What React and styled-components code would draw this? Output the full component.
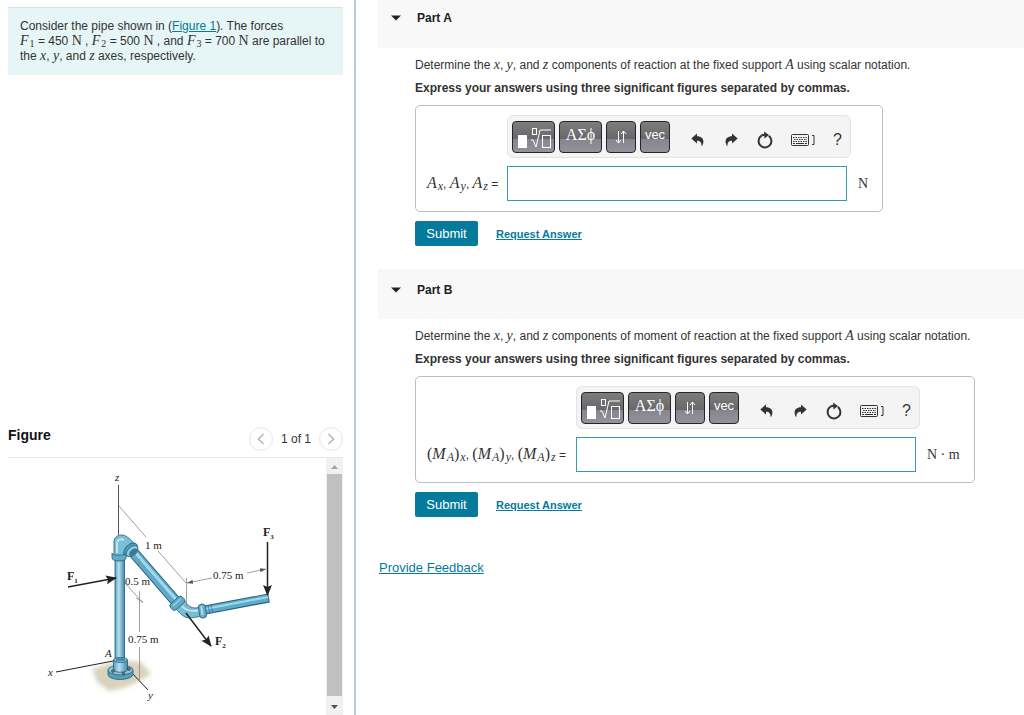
import React, { useState } from "react";
import styled, { createGlobalStyle } from "styled-components";

const GlobalStyle = createGlobalStyle`
  * {
    box-sizing: border-box;
  }
  body {
    margin: 0;
    background: #fff;
    color: #333;
    font-family: "Liberation Sans", Arial, sans-serif;
    font-size: 12px;
    line-height: 16px;
  }
  button,
  input {
    font-family: inherit;
  }
`;

const Page = styled.div`
  display: flex;
  min-height: 100vh;
`;

const Sidebar = styled.aside`
  display: flex;
  flex-direction: column;
  justify-content: space-between;
  flex: 0 0 356px;
  height: 100vh;
  padding: 7px 11px 0 8px;
  border-right: 2px solid #b9cbdf;
`;

const Problem = styled.section`
  padding: 11px 11px 11px 12px;
  background: #e6f5f6;
  border-top: 1px solid #d3e2e4;
  line-height: 15px;
`;

const NoWrap = styled.span`
  white-space: nowrap;
`;

const TextLink = styled.a`
  color: #047a9c;
  font-size: ${props => props.$size || "inherit"};
  font-weight: ${props => (props.$bold ? "bold" : "normal")};
`;

const MathText = styled.span`
  font-family: "Liberation Serif", "Times New Roman", serif;
  font-size: 14px;
  line-height: 0;
  font-style: ${props => (props.$upright ? "normal" : "italic")};
  white-space: nowrap;
`;

const Sub = styled.sub`
  margin-left: 1px;
  font-size: 10px;
  font-style: ${props => (props.$upright ? "normal" : "inherit")};
  line-height: 0;
  vertical-align: -2px;
`;

const FigureHeader = styled.header`
  display: flex;
  align-items: center;
  justify-content: space-between;
  height: 37px;
  border-bottom: 1px solid #e6e6e6;
`;

const FigureTitle = styled.h2`
  margin: 0;
  padding-bottom: 8px;
  font-size: 14px;
  color: #111;
`;

const Pager = styled.nav`
  display: flex;
  align-items: center;
  gap: 8px;
  font-size: 12px;
  color: #333;
`;

const PagerBtn = styled.button`
  display: flex;
  align-items: center;
  justify-content: center;
  width: 24px;
  height: 24px;
  padding: 0;
  border: 1px solid #e6e6e6;
  border-radius: 50%;
  background: #fff;
  color: #b5b5b5;
`;

const FigureBody = styled.div`
  display: flex;
  height: 257px;
`;

const Drawing = styled.svg`
  flex: 1;
  min-width: 0;
  height: 257px;
  font-family: "Liberation Serif", "Times New Roman", serif;
  font-size: 11px;
  fill: #222;
`;

const ScrollTrack = styled.div`
  display: flex;
  flex-direction: column;
  align-items: center;
  justify-content: space-between;
  width: 17px;
  padding: 0 1px;
  background: #f1f1f1;
`;

const ScrollArrow = styled.svg`
  width: 15px;
  height: 16px;
  fill: ${props => props.$color};
`;

const ScrollThumb = styled.div`
  flex: 1;
  align-self: stretch;
  margin-bottom: 3px;
  background: #c1c1c1;
`;

const Main = styled.main`
  flex: 1;
  min-width: 0;
  padding-left: 22px;
`;

const PartHeader = styled.header`
  display: flex;
  align-items: center;
  height: ${props => (props.$first ? "48px" : "50px")};
  padding: 0 0 ${props => (props.$first ? "12px" : "8px")} 13px;
  background: #f8f8f8;
`;

const ToggleBtn = styled.button`
  display: flex;
  align-items: center;
  gap: 16px;
  padding: 0;
  border: 0;
  background: none;
  color: #222;
  font-size: 12px;
  font-weight: bold;
`;

const PartBody = styled.div`
  padding: 9px 0 23px 37px;
`;

const Prompt = styled.p`
  margin: 0 0 7px;
`;

const Instructions = styled.p`
  margin: 0 0 9px;
  font-weight: bold;
`;

const AnswerBox = styled.div`
  display: inline-grid;
  grid-template-columns: ${props => props.$labelWidth} 340px auto;
  row-gap: 8px;
  padding: 9px 14px 10px 11px;
  border: 1px solid #bdbdbd;
  border-radius: 5px;
  vertical-align: top;
`;

const Toolbar = styled.div`
  grid-column: 2 / 4;
  justify-self: start;
  display: flex;
  align-items: center;
  gap: 4px;
  width: 344px;
  height: 43px;
  padding: 0 8px 0 4px;
  border: 1px solid #e3e3e3;
  border-radius: 6px;
  background: #f4f4f4;
`;

const KeyBtn = styled.button`
  display: flex;
  align-items: center;
  justify-content: center;
  width: ${props => (props.$wide ? "43px" : "30px")};
  height: 32px;
  padding: 0 0 ${props => (props.$raised ? "4px" : "0")};
  border: 1px solid #26262a;
  border-radius: 4px;
  background: linear-gradient(#7d7d80, #68686a 56%, #86868e 58%, #92929c);
  color: #fff;
  font-family: ${props =>
    props.$serif ? '"Liberation Serif", serif' : '"Liberation Sans", sans-serif'};
  font-size: ${props => (props.$serif ? "16px" : "13px")};
`;

const ToolGroup = styled.div`
  display: flex;
  flex: 1;
  align-items: center;
  justify-content: space-between;
  padding: 6px 0 0 15px;
`;

const ToolBtn = styled.button`
  display: flex;
  justify-content: center;
  min-width: ${props => (props.$narrow ? "0" : "16px")};
  padding: 0;
  border: 0;
  background: none;
  color: #333;
  font-size: 16px;
`;

const AnswerLabel = styled.label`
  align-self: center;
  white-space: nowrap;

  ${MathText} {
    font-size: 16px;
  }
  ${Sub} {
    font-size: 12px;
  }
`;

const AnswerInput = styled.input`
  width: 340px;
  height: 35px;
  padding: 0 8px;
  border: 1px solid #3a9bb0;
  background: #fff;
  font-size: 14px;
`;

const Unit = styled.span`
  align-self: center;
  padding-left: 11px;
`;

const Actions = styled.div`
  display: flex;
  align-items: baseline;
  gap: 18px;
  margin-top: 9px;
`;

const SubmitBtn = styled.button`
  width: 63px;
  height: 25px;
  padding: 0;
  border: 0;
  border-radius: 2px;
  background: #047a9c;
  color: #fff;
  font-size: 13px;
`;

const Feedback = styled.footer`
  padding: 20px 0 0 1px;
`;

const Var = ({ children, sub, uprightSub }) => (
  <MathText>
    {children}
    {sub && <Sub $upright={uprightSub}>{sub}</Sub>}
  </MathText>
);

const RootIcon = () => (
  <svg width="34" height="24" viewBox="0 0 34 24" fill="none" stroke="#fff">
    <rect x="1" y="10" width="9" height="13" fill="#fff" stroke="none" />
    <rect x="15.5" y="3.5" width="4" height="6" />
    <path d="M14 15h2l3 7 4-17h11" />
    <rect x="25.5" y="10.5" width="8" height="12" />
  </svg>
);

const ArrowsIcon = () => (
  <svg width="12" height="16" viewBox="0 0 12 16" fill="none" stroke="#fff">
    <path d="M3.5 2v12M1 11l2.500 3L6 11M8.500 14V2M6 5l2.500-3L11 5" />
  </svg>
);

const UndoIcon = ({ flip }) => (
  <svg width="13" height="14" viewBox="0 0 13 14" fill="currentColor">
    <path
      transform={flip ? "matrix(-1 0 0 1 13 0)" : undefined}
      d="M6 .5L.3 5.5 6 10.500V7.800C9 7.700 10.600 9.200 10.700 13.500C14 8.500 12.500 3.400 6 3.300Z"
    />
  </svg>
);

const ResetIcon = () => (
  <svg width="16" height="18" viewBox="0 0 16 18" fill="none" stroke="currentColor">
    <path d="M4.500 4.700A6.400 6.400 0 1 0 11.800 4.900" strokeWidth="2" />
    <path d="M7 .5l5 3.500-4.500 3.500z" fill="currentColor" stroke="none" />
    <path d="M4.500 4.700Q6 3.800 8 3.800" strokeWidth="2" />
  </svg>
);

const KeyboardIcon = () => (
  <svg width="24" height="12" viewBox="0 0 24 12" fill="none" stroke="currentColor">
    <rect x=".5" y=".5" width="17" height="11" rx="1" />
    <path d="M2 3.500h14M3 5.500h13M2 7.500h14" strokeDasharray="1.500 1" />
    <path d="M2 9.500h2M5 9.500h8M14 9.500h2" />
    <path d="M21 1.500h2v9h-2" />
  </svg>
);

function PipeFigure() {
  return (
    <Drawing viewBox="8 458 318 257" role="img" aria-label="Pipe assembly">
      <defs>
        <linearGradient id="post" x1="0" x2="1">
          <stop offset="0" stopColor="#4f9fc0" />
          <stop offset=".4" stopColor="#b9e0ee" />
          <stop offset="1" stopColor="#3f88aa" />
        </linearGradient>
        <filter id="soft" x="-20%" y="-20%" width="140%" height="140%">
          <feGaussianBlur stdDeviation="2" />
        </filter>
        <marker
          id="head"
          viewBox="0 0 12 10"
          refX="11"
          refY="5"
          markerWidth="12"
          markerHeight="9"
          markerUnits="userSpaceOnUse"
          orient="auto"
        >
          <path d="M0 0l12 5-12 5 2-5z" />
        </marker>
        <marker
          id="tick"
          viewBox="0 0 6 4"
          refX="6"
          refY="2"
          markerWidth="6"
          markerHeight="4"
          markerUnits="userSpaceOnUse"
          orient="auto-start-reverse"
        >
          <path d="M0 0l6 2-6 2z" fill="#555" />
        </marker>
      </defs>

      {/* ground shadow */}
      <path
        d="M92 669l27-9 22 2 10 12-13 8-14 6-15 3-12-9z"
        fill="#d8d3bd"
        filter="url(#soft)"
      />

      {/* axes */}
      <g fill="none" stroke="#555">
        <path d="M118.500 485v50" />
        <path d="M56 672l57-11" stroke="#222" />
        <path d="M131 672l17 18" stroke="#222" />
      </g>

      {/* vertical post */}
      <rect x="115" y="558" width="9.500" height="104" fill="url(#post)" stroke="#275f7a" strokeWidth=".8" />

      {/* flange */}
      <path d="M108 670v5c2 6 22 6 25 0v-5z" fill="#559fbb" stroke="#275f7a" strokeWidth=".8" />
      <ellipse cx="120.500" cy="670" rx="12.500" ry="5" fill="#8bc6dc" stroke="#275f7a" strokeWidth=".8" />
      <path d="M113.500 660v10c2 3 12 3 14 0v-10z" fill="url(#post)" stroke="#275f7a" strokeWidth=".8" />
      <ellipse cx="120.500" cy="660" rx="7" ry="2.500" fill="#7ab9d1" stroke="#275f7a" strokeWidth=".8" />
      <path d="M116 658h9v3h-9z" fill="#4a8dab" />
      <g fill="#5a7683" stroke="#333" strokeWidth=".5">
        <circle cx="113" cy="671" r="1.500" />
        <circle cx="123.500" cy="673.500" r="1.500" />
        <circle cx="129" cy="669" r="1.500" />
      </g>

      {/* sloped pipe */}
      <g fill="none">
        <path d="M133 552l46 53" stroke="#275f7a" strokeWidth="11" />
        <path d="M133 552l46 53" stroke="#5dabc9" strokeWidth="9" />
        <path d="M134 551l46 53" stroke="#a5d7e8" strokeWidth="3" />
      </g>

      {/* end pipe */}
      <g fill="none">
        <path d="M205 610l64-12" stroke="#275f7a" strokeWidth="9" />
        <path d="M205 610l63-12" stroke="#5dabc9" strokeWidth="7" />
        <path d="M205 609l63-12" stroke="#a5d7e8" strokeWidth="2" />
        <path d="M208 605l2 9M211 605l2 8" stroke="#3b7d99" strokeWidth=".8" />
      </g>

      {/* elbows */}
      <path
        d="M114 554V542c0-5 4-7 8-7 3 0 6 2 12 8l-8 10-2-1v6h-10z"
        fill="#79bdd6"
        stroke="#275f7a"
        strokeWidth=".8"
      />
      <path d="M117 553v-10c0-3 4-5 7-3" fill="none" stroke="#c4e6f1" strokeWidth="2" />
      <path d="M112 553c0 3 14 3 14 0v5c0 4-14 4-14 0z" fill="#5fadc9" stroke="#275f7a" strokeWidth=".8" />
      <g transform="rotate(-42 132 551)">
        <ellipse cx="132" cy="549" rx="8" ry="5" fill="#4d9dbb" stroke="#275f7a" strokeWidth=".8" />
        <ellipse cx="132" cy="551" rx="7" ry="4" fill="#8bcbe0" stroke="#275f7a" strokeWidth=".8" />
        <ellipse cx="132" cy="553" rx="5" ry="3" fill="#3d7892" />
      </g>
      <path
        d="M175 608l9-8c4 6 7 8 12 8l8-2 1 9c-7 2-15 4-20 2-4-2-7-6-10-9z"
        fill="#79bdd6"
        stroke="#275f7a"
        strokeWidth=".8"
      />
      <path d="M182 606c4 5 9 6 18 4" fill="none" stroke="#c4e6f1" strokeWidth="2" />
      <g transform="rotate(-42 178 604)">
        <rect x="170" y="599" width="16" height="8" rx="3" fill="#5fadc9" stroke="#275f7a" strokeWidth=".8" />
        <path d="M173 602h10" stroke="#b4ddea" />
      </g>
      <g transform="rotate(-8 203 611)">
        <rect x="199" y="604" width="7" height="14" rx="3" fill="#5fadc9" stroke="#275f7a" strokeWidth=".8" />
        <path d="M202 606v9" stroke="#b4ddea" strokeWidth="2" />
      </g>

      {/* dimension lines */}
      <g fill="none" stroke="#888" strokeWidth=".8">
        <path d="M119 506l27 31M158 551l28 32" />
        <path d="M186.500 578v28" />
        <path d="M187 583l25-5" markerStart="url(#tick)" />
        <path d="M247 573l19-4" markerEnd="url(#tick)" />
        <path d="M139.500 559v9M139.500 591v41M139.500 647v35" />
        <path d="M125 583l18 20M136 598l7 4" />
      </g>

      {/* forces */}
      <g fill="none" stroke="#222" strokeWidth="1.500">
        <path d="M68 587l48-9" markerEnd="url(#head)" />
        <path d="M186 613l25 33" markerEnd="url(#head)" />
        <path d="M267.500 542v53" markerEnd="url(#head)" />
      </g>

      <g fontStyle="italic">
        <text x="115" y="481">z</text>
        <text x="48" y="676">x</text>
        <text x="148" y="699">y</text>
        <text x="105" y="657">A</text>
      </g>
      <text x="145" y="549">1 m</text>
      <text x="125" y="585">0.5 m</text>
      <text x="213" y="579">0.75 m</text>
      <text x="128" y="643">0.75 m</text>
      <g fontWeight="bold" fontSize="12">
        <text x="67" y="580">
          F<tspan dy="3" fontSize="7">1</tspan>
        </text>
        <text x="215" y="645">
          F<tspan dy="3" fontSize="7">2</tspan>
        </text>
        <text x="263" y="536">
          F<tspan dy="3" fontSize="7">3</tspan>
        </text>
      </g>
    </Drawing>
  );
}

function Part({ id, title, first, quantity, labelWidth, label, unit }) {
  const [open, setOpen] = useState(true);
  const [answer, setAnswer] = useState("");

  return (
    <section>
      <PartHeader $first={first}>
        <ToggleBtn aria-expanded={open} onClick={() => setOpen(!open)}>
          <svg width="10" height="6" viewBox="0 0 10 6" fill="currentColor">
            <path d="M0 .5h10L5 5.500z" />
          </svg>
          {title}
        </ToggleBtn>
      </PartHeader>
      {open && (
        <PartBody>
          <Prompt>
            Determine the <Var>x</Var>, <Var>y</Var>, and <Var>z</Var>{" "}
            components of {quantity} at the fixed support <Var>A</Var> using
            scalar notation.
          </Prompt>
          <Instructions>
            Express your answers using three significant figures separated by
            commas.
          </Instructions>
          <AnswerBox $labelWidth={labelWidth}>
            <Toolbar>
              <KeyBtn $wide aria-label="Templates">
                <RootIcon />
              </KeyBtn>
              <KeyBtn $wide $serif $raised>
                ΑΣϕ
              </KeyBtn>
              <KeyBtn aria-label="Subscript and superscript">
                <ArrowsIcon />
              </KeyBtn>
              <KeyBtn $raised>vec</KeyBtn>
              <ToolGroup>
                <ToolBtn aria-label="Undo">
                  <UndoIcon />
                </ToolBtn>
                <ToolBtn aria-label="Redo">
                  <UndoIcon flip />
                </ToolBtn>
                <ToolBtn aria-label="Reset">
                  <ResetIcon />
                </ToolBtn>
                <ToolBtn aria-label="Keyboard shortcuts">
                  <KeyboardIcon />
                </ToolBtn>
                <ToolBtn $narrow>?</ToolBtn>
              </ToolGroup>
            </Toolbar>
            <AnswerLabel htmlFor={id}>{label} =</AnswerLabel>
            <AnswerInput
              id={id}
              value={answer}
              onChange={e => setAnswer(e.target.value)}
            />
            <Unit>
              <MathText $upright>{unit}</MathText>
            </Unit>
          </AnswerBox>
          <Actions>
            <SubmitBtn>Submit</SubmitBtn>
            <TextLink href="#answer" $bold $size="11px">
              Request Answer
            </TextLink>
          </Actions>
        </PartBody>
      )}
    </section>
  );
}

const Moment = ({ axis }) => (
  <MathText>
    <MathText $upright>(</MathText>M<Sub>A</Sub>
    <MathText $upright>)</MathText>
    <Sub>{axis}</Sub>
  </MathText>
);

const Force = ({ index, value }) => (
  <NoWrap>
    <Var sub={index} uprightSub>
      F
    </Var>{" "}
    = {value} <MathText $upright>N</MathText>
  </NoWrap>
);

function App() {
  return (
    <Page>
      <GlobalStyle />
      <Sidebar>
        <Problem>
          Consider the pipe shown in (<TextLink href="#figure">Figure 1</TextLink>
          ). The forces <Force index="1" value={450} /> ,{" "}
          <Force index="2" value={500} /> , and <Force index="3" value={700} />{" "}
          are parallel to the <Var>x</Var>, <Var>y</Var>, and <Var>z</Var> axes,
          respectively.
        </Problem>
        <section id="figure">
          <FigureHeader>
            <FigureTitle>Figure</FigureTitle>
            <Pager>
              <PagerBtn aria-label="Previous figure">
                <svg width="8" height="12" viewBox="0 0 8 12" fill="none" stroke="currentColor" strokeWidth="1.500">
                  <path d="M6.500 1L1.500 6l5 5" />
                </svg>
              </PagerBtn>
              1 of 1
              <PagerBtn aria-label="Next figure">
                <svg width="8" height="12" viewBox="0 0 8 12" fill="none" stroke="currentColor" strokeWidth="1.500">
                  <path d="M1.500 1l5 5-5 5" />
                </svg>
              </PagerBtn>
            </Pager>
          </FigureHeader>
          <FigureBody>
            <PipeFigure />
            <ScrollTrack>
              <ScrollArrow $color="#a3a3a3" viewBox="0 0 15 16">
                <path d="M4 11l3.500-4 3.500 4z" />
              </ScrollArrow>
              <ScrollThumb />
              <ScrollArrow $color="#505050" viewBox="0 0 15 16">
                <path d="M4 6l3.500 4L11 6z" />
              </ScrollArrow>
            </ScrollTrack>
          </FigureBody>
        </section>
      </Sidebar>
      <Main>
        <Part
          id="part-a"
          title="Part A"
          first
          quantity="reaction"
          labelWidth="80px"
          unit="N"
          label={
            <>
              <Var sub="x">A</Var>, <Var sub="y">A</Var>, <Var sub="z">A</Var>
            </>
          }
        />
        <Part
          id="part-b"
          title="Part B"
          quantity="moment of reaction"
          labelWidth="149px"
          unit="N · m"
          label={
            <>
              <Moment axis="x" />, <Moment axis="y" />, <Moment axis="z" />
            </>
          }
        />
        <Feedback>
          <TextLink href="#feedback" $size="13px">
            Provide Feedback
          </TextLink>
        </Feedback>
      </Main>
    </Page>
  );
}

export default App;
